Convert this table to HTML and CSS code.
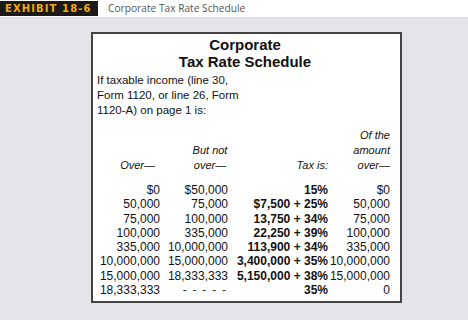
FILE: index.html
```html
<!DOCTYPE html>
<html>
<head>
<meta charset="utf-8">
<link rel="stylesheet" href="styles.css">
</head>
<body>
<header class="topbar">
  <div class="label">EXHIBIT 18-6</div>
  <div class="caption">Corporate Tax Rate Schedule</div>
</header>
<main class="page">
  <section class="box">
    <h1 class="title">Corporate<br>Tax Rate Schedule</h1>
    <p class="intro">If taxable income (line 30,<br>Form 1120, or line 26, Form<br>1120-A) on page 1 is:</p>
    <div class="grid">
      <div class="h h1">Over—</div>
      <div class="h h2">But not<br>over—</div>
      <div class="h h3">Tax is:</div>
      <div class="h h4">Of the<br>amount<br>over—</div>

      <div>$0</div><div>$50,000</div><div class="b">15%</div><div>$0</div>
      <div>50,000</div><div>75,000</div><div class="b">$7,500 + 25%</div><div>50,000</div>
      <div>75,000</div><div>100,000</div><div class="b">13,750 + 34%</div><div>75,000</div>
      <div>100,000</div><div>335,000</div><div class="b">22,250 + 39%</div><div>100,000</div>
      <div>335,000</div><div>10,000,000</div><div class="b">113,900 + 34%</div><div>335,000</div>
      <div>10,000,000</div><div>15,000,000</div><div class="b">3,400,000 + 35%</div><div>10,000,000</div>
      <div>15,000,000</div><div>18,333,333</div><div class="b">5,150,000 + 38%</div><div>15,000,000</div>
      <div>18,333,333</div><div class="dash">- - - - -</div><div class="b">35%</div><div>0</div>
    </div>
  </section>
</main>
</body>
</html>
```
FILE: styles.css
```css
html, body {
  margin: 0;
  padding: 0;
}
body {
  width: 468px;
  height: 320px;
  background: #e4e4e9;
  overflow: hidden;
  font-family: "Liberation Sans", Arial, sans-serif;
  color: #111;
}
.topbar {
  height: 17px;
  background: #fff;
  display: flex;
  align-items: center;
  box-shadow: 0 1px 2px rgba(0,0,0,0.06);
}
.label {
  height: 15px;
  width: 98px;
  background: #1c1a18;
  color: #f0aa10;
  font-family: "DejaVu Sans", sans-serif;
  font-weight: bold;
  font-size: 10px;
  letter-spacing: 1.1px;
  line-height: 15px;
  padding-left: 5px;
  box-sizing: border-box;
  white-space: nowrap;
  overflow: hidden;
}
.caption {
  margin-left: 10px;
  font-family: "Open Sans", sans-serif;
  font-size: 10.2px;
  color: #555;
  line-height: 15px;
}
.page {
  padding: 15px 0 0 91px;
}
.box {
  width: 311px;
  height: 271px;
  box-sizing: border-box;
  border: 2px solid #444;
  background: #fff;
  padding: 2px 10px 0 4px;
}
.title {
  margin: 0;
  font-size: 15px;
  line-height: 17px;
  font-weight: bold;
  text-align: center;
  padding-left: 3px;
}
.intro {
  margin: 3px 0 0 0;
  font-size: 11.5px;
  line-height: 15px;
}
.grid {
  display: grid;
  grid-template-columns: 63px 68px 100px 62px;
  font-size: 12px;
  line-height: 14.3px;
  text-align: right;
  margin-top: 10px;
}
.h {
  font-style: italic;
  font-size: 11px;
  line-height: 15px;
  align-self: end;
  margin-bottom: 10px;
}
.h1 { padding-right: 5px; }
.h2 { text-align: center; padding-left: 28px; margin-right: -4px; }
.b { font-weight: bold; }
.dash { word-spacing: 2.5px; color: #333; padding-right: 2px; }
```
